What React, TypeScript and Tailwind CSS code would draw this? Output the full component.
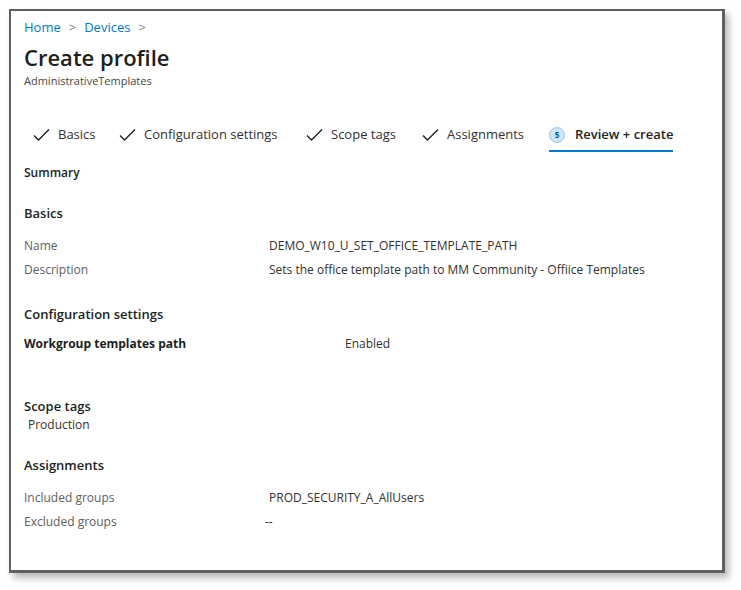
import React from 'react';

const font = { fontFamily: '"Open Sans", "Noto Sans", sans-serif' };

function Check() {
    return (
        <svg width="17" height="14" viewBox="0 0 17 14" className="shrink-0">
            <path d="M1 7.5 L5.5 12 L16 1.5" fill="none" stroke="#201f1e" strokeWidth="1.4" />
        </svg>
    );
}

function Row({ label, value, valueX }: { label: string; value: string; valueX: string }) {
    return (
        <div className="flex h-[24px] items-center text-[12px]">
            <div className={`${valueX} shrink-0 text-[#605e5c]`}>{label}</div>
            <div className="text-[#323130]">{value}</div>
        </div>
    );
}

export default function App() {
    const steps = [
        { name: 'Basics', w: 'w-[86px]' },
        { name: 'Configuration settings', w: 'w-[187px]' },
        { name: 'Scope tags', w: 'w-[116px]' },
        { name: 'Assignments', w: 'w-[127px]' },
    ];

    return (
        <div className="min-h-screen bg-white" style={font}>
            <div className="ml-[9px] mt-[9px] h-[564px] w-[716px] border-t-2 border-l-2 border-r-[3px] border-b-[3px] border-[#5f5f5f] bg-white shadow-[4px_5px_7px_rgba(0,0,0,0.28)]">
                <div className="pl-[13px] pt-[7px]">
                    {/* breadcrumb */}
                    <div className="flex h-[20px] items-center gap-[8px] text-[13px] text-[#0078d4]">
                        <span>Home</span>
                        <span className="text-[#8a8886]">&gt;</span>
                        <span>Devices</span>
                        <span className="text-[#8a8886]">&gt;</span>
                    </div>
                    <h1 className="mt-[6px] text-[22px] font-semibold leading-[26px] text-[#201f1e]">Create profile</h1>
                    <div className="mt-[4px] text-[11px] leading-[14px] text-[#484644]">AdministrativeTemplates</div>

                    {/* wizard tabs */}
                    <div className="mt-[34px] flex h-[26px] items-center whitespace-nowrap pl-[9px] text-[13px] text-[#323130]">
                        {steps.map((s) => (
                            <div key={s.name} className={`flex items-center gap-[8px] ${s.w}`}>
                                <Check />
                                <span>{s.name}</span>
                            </div>
                        ))}
                        <div className="relative flex h-full items-center gap-[10px] font-semibold text-[#201f1e]">
                            <span className="flex h-[16px] w-[16px] items-center justify-center rounded-full border border-[#9cc7ec] bg-[#cfe4f7] text-[8px] font-bold text-[#005a9e]">5</span>
                            <span>Review + create</span>
                            <div className="absolute left-0 right-0 top-[28px] h-[2px] bg-[#0078d4]" />
                        </div>
                    </div>

                    <div className="mt-[16px] text-[12px] font-semibold text-[#201f1e]">Summary</div>

                    <div className="mt-[22px] text-[13px] font-semibold text-[#201f1e]">Basics</div>
                    <div className="mt-[10px]">
                        <Row label="Name" value="DEMO_W10_U_SET_OFFICE_TEMPLATE_PATH" valueX="w-[245px]" />
                        <Row label="Description" value="Sets the office template path to MM Community - Offiice Templates" valueX="w-[245px]" />
                    </div>

                    <div className="mt-[23px] text-[13px] font-semibold text-[#201f1e]">Configuration settings</div>
                    <div className="mt-[8px] flex h-[24px] items-center text-[12px]">
                        <div className="w-[321px] shrink-0 font-bold text-[#201f1e]">Workgroup templates path</div>
                        <div className="text-[#323130]">Enabled</div>
                    </div>

                    <div className="mt-[41px] text-[13px] font-semibold text-[#201f1e]">Scope tags</div>
                    <div className="-mt-[1px] pl-[4px] text-[12px] leading-[18px] text-[#323130]">Production</div>

                    <div className="mt-[22px] text-[13px] font-semibold text-[#201f1e]">Assignments</div>
                    <div className="mt-[11px]">
                        <Row label="Included groups" value="PROD_SECURITY_A_AllUsers" valueX="w-[245px]" />
                        <Row label="Excluded groups" value="--" valueX="w-[241px]" />
                    </div>
                </div>
            </div>
        </div>
    );
}
